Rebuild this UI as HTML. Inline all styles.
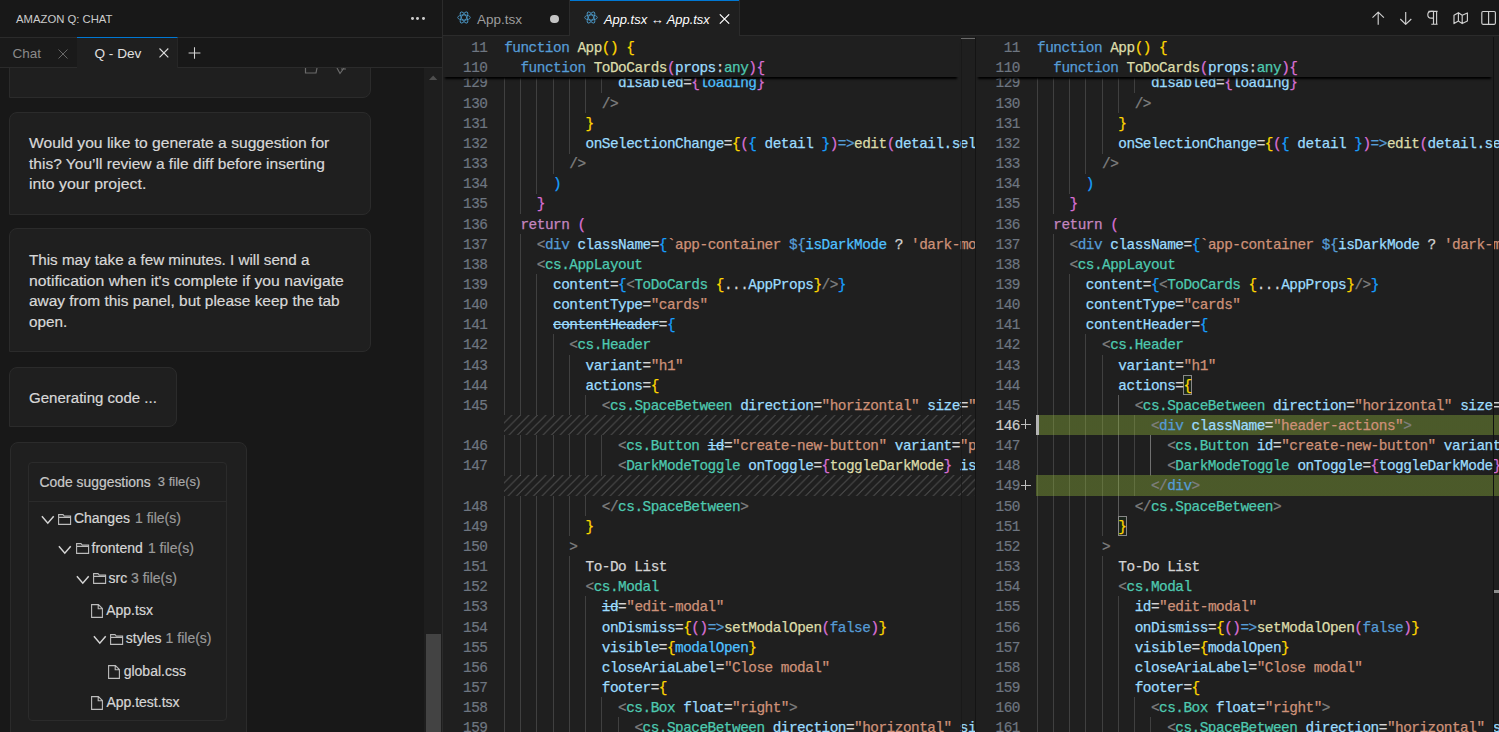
<!DOCTYPE html>
<html><head><meta charset="utf-8"><style>
*{margin:0;padding:0;box-sizing:border-box}
html,body{width:1499px;height:732px;overflow:hidden;background:#181818}
body{position:relative;font-family:"Liberation Sans",sans-serif;color:#cccccc}
.abs{position:absolute}
svg{display:block}
#side{position:absolute;left:0;top:0;width:443px;height:732px;background:#181818;border-right:1px solid #2b2b2b;overflow:hidden}
.dot{width:2.8px;height:2.8px;border-radius:50%;background:#cccccc}
.card{position:absolute;background:#1f1f1f;border:1px solid #2b2b2b;border-radius:8px;border-bottom-left-radius:0}
.tt{line-height:20px;white-space:pre;-webkit-text-stroke-width:0.2px}
.ctext{position:absolute;left:18.9px;font-size:15.4px;line-height:20.7px;color:#d8d8d8;-webkit-text-stroke:0.2px #d8d8d8;white-space:pre;transform-origin:0 0}
#edit{position:absolute;left:443px;top:0;width:1056px;height:732px;background:#1f1f1f;overflow:hidden}
.pane{position:absolute;top:37px;height:695px;overflow:hidden;background:#1f1f1f}
.ln{position:absolute;left:0;height:20.15px;line-height:20.15px;text-align:right;font-family:"Liberation Mono",monospace;font-size:14.4px;letter-spacing:-0.5px;color:#6e7681;white-space:pre;-webkit-text-stroke-width:0.2px}
.cl{position:absolute;height:20.15px;line-height:20.15px;font-family:"Liberation Mono",monospace;font-size:14.4px;letter-spacing:-0.5px;white-space:pre;color:#d4d4d4;-webkit-text-stroke-width:0.25px}
.cl i{font-style:normal}
.kw{color:#569cd6} .fn{color:#dcdcaa} .var{color:#9cdcfe} .str{color:#ce9178} .tag{color:#808080}
.type{color:#4ec9b0} .ctl{color:#c586c0} .txt{color:#d4d4d4} .op{color:#d4d4d4}
.cst{color:#4fc1ff} .b1{color:#ffd700} .b2{color:#da70d6} .b3{color:#179fff}
.s{text-decoration:line-through}
.hatch{position:absolute;right:0;height:20.15px;background-image:linear-gradient(-45deg,#cccccc33 11%,#0000 11%,#0000 50%,#cccccc33 50%,#cccccc33 61%,#0000 61%,#0000 100%);background-size:8.5px 8.5px}
.ins{position:absolute;right:0;height:20.15px;background:linear-gradient(#9ccc2c33,#9ccc2c33),#9bb95533}
.bm{position:absolute;width:9px;border:1px solid #888888;background:#0064001a}
.cur{position:absolute;width:2.5px;background:#b4b4b4}
.plus{position:absolute}
.g{position:absolute;width:1px;height:20.65px;background:#404040}
.ga{background:#707070} .ga2{background:#5a5a5a}
.ln.act{color:#cccccc}
.sticky{position:absolute;left:0;top:0;height:40.3px;background:#1f1f1f;box-shadow:0 4px 2px -2px #000}
</style></head>
<body>
<div id="side">
<div class="abs" style="left:16px;top:11px;font-size:11.3px;line-height:16px;color:#cccccc;white-space:pre">AMAZON Q: CHAT</div>
<div class="abs dot" style="left:411.05px;top:17.2px"></div>
<div class="abs dot" style="left:416.4px;top:17.2px"></div>
<div class="abs dot" style="left:421.75px;top:17.2px"></div>
<div class="abs" style="left:0;top:36.5px;width:442px;height:1px;background:#2b2b2b"></div>
<div class="abs" style="left:0;top:68px;width:424px;height:664px;background:#181818;overflow:hidden">
<div class="card" style="left:9px;top:-60px;width:362px;height:89.5px"></div>
<svg class="abs" style="left:300px;top:0" width="50" height="8" viewBox="0 0 50 8"><path d="M5.5 0 V5 H16 L17 0" fill="none" stroke="#6b6b6b" stroke-width="1.2"/><path d="M37 0 L40 5.5 L44 0 M41 1 H46" fill="none" stroke="#6b6b6b" stroke-width="1.2"/></svg>
<div class="card" style="left:9px;top:43.50px;width:362px;height:103.2px">
<div class="ctext" style="top:20.50px;transform:scaleX(1.0154)">Would you like to generate a suggestion for</div>
<div class="ctext" style="top:41.20px;transform:scaleX(1.0090)">this? You’ll review a file diff before inserting</div>
<div class="ctext" style="top:61.90px;transform:scaleX(1.0309)">into your project.</div>
</div>
<div class="card" style="left:9px;top:160.40px;width:362px;height:123.3px">
<div class="ctext" style="top:20.50px;transform:scaleX(0.9874)">This may take a few minutes. I will send a</div>
<div class="ctext" style="top:41.20px;transform:scaleX(1.0237)">notification when it's complete if you navigate</div>
<div class="ctext" style="top:61.90px;transform:scaleX(1.0028)">away from this panel, but please keep the tab</div>
<div class="ctext" style="top:82.60px;transform:scaleX(0.9943)">open.</div>
</div>
<div class="card" style="left:9px;top:298.60px;width:168px;height:60.8px">
<div class="ctext" style="top:20.50px;transform:scaleX(0.9770)">Generating code ...</div>
</div>
<div class="card" style="left:9.5px;top:374.20px;width:237px;height:400px;border-bottom-left-radius:8px">
</div>
</div>
<div class="abs" style="left:28.4px;top:462.4px;width:198.6px;height:258.8px;border:1px solid #2b2b2b;border-radius:4px;background:#1f1f1f"></div>
<div class="abs" style="left:29.4px;top:500.8px;width:196.6px;height:1px;background:#2b2b2b"></div>
<div class="abs tt" style="left:39.5px;top:472px;font-size:13.9px;color:#c8c8c8">Code suggestions</div>
<div class="abs tt" style="left:157.8px;top:472px;font-size:13px;color:#a8a8a8">3 file(s)</div>
<div class="abs tt" style="left:73.9px;top:507.9px;font-size:14px;color:#d6d6d6">Changes</div>
<div class="abs tt" style="left:135.0px;top:507.9px;font-size:14px;color:#9a9a9a">1 file(s)</div>
<div class="abs" style="left:40.7px;top:515.1px"><svg width="14" height="10" viewBox="0 0 14 10"><path d="M0.9 1.2 L6.8 8.2 L12.7 1.2" fill="none" stroke="#d4d4d4" stroke-width="1.5"/></svg></div>
<div class="abs" style="left:57.5px;top:513.7px"><svg width="14" height="11" viewBox="0 0 14 11"><path d="M0.6 0.6 H5 L6.2 2 H12.6 V10.4 H0.6 Z M0.6 3.4 H12.6" fill="none" stroke="#bdbdbd" stroke-width="1.1"/></svg></div>
<div class="abs tt" style="left:91.5px;top:537.5px;font-size:14px;color:#d6d6d6">frontend</div>
<div class="abs tt" style="left:147.9px;top:537.5px;font-size:14px;color:#9a9a9a">1 file(s)</div>
<div class="abs" style="left:58.0px;top:544.7px"><svg width="14" height="10" viewBox="0 0 14 10"><path d="M0.9 1.2 L6.8 8.2 L12.7 1.2" fill="none" stroke="#d4d4d4" stroke-width="1.5"/></svg></div>
<div class="abs" style="left:75.6px;top:543.3px"><svg width="14" height="11" viewBox="0 0 14 11"><path d="M0.6 0.6 H5 L6.2 2 H12.6 V10.4 H0.6 Z M0.6 3.4 H12.6" fill="none" stroke="#bdbdbd" stroke-width="1.1"/></svg></div>
<div class="abs tt" style="left:108.6px;top:567.5px;font-size:14px;color:#d6d6d6">src</div>
<div class="abs tt" style="left:131.0px;top:567.5px;font-size:14px;color:#9a9a9a">3 file(s)</div>
<div class="abs" style="left:75.6px;top:574.7px"><svg width="14" height="10" viewBox="0 0 14 10"><path d="M0.9 1.2 L6.8 8.2 L12.7 1.2" fill="none" stroke="#d4d4d4" stroke-width="1.5"/></svg></div>
<div class="abs" style="left:92.5px;top:573.3px"><svg width="14" height="11" viewBox="0 0 14 11"><path d="M0.6 0.6 H5 L6.2 2 H12.6 V10.4 H0.6 Z M0.6 3.4 H12.6" fill="none" stroke="#bdbdbd" stroke-width="1.1"/></svg></div>
<div class="abs tt" style="left:106.2px;top:600.0px;font-size:14px;color:#d6d6d6">App.tsx</div>
<div class="abs" style="left:90.7px;top:604.0px"><svg width="12" height="14" viewBox="0 0 12 14"><path d="M0.6 0.6 H7.4 L11.4 4.6 V13.4 H0.6 Z M7.2 0.6 V4.8 H11.4" fill="none" stroke="#bdbdbd" stroke-width="1.1"/></svg></div>
<div class="abs tt" style="left:125.8px;top:627.9px;font-size:14px;color:#d6d6d6">styles</div>
<div class="abs tt" style="left:165.6px;top:627.9px;font-size:14px;color:#9a9a9a">1 file(s)</div>
<div class="abs" style="left:92.8px;top:635.1px"><svg width="14" height="10" viewBox="0 0 14 10"><path d="M0.9 1.2 L6.8 8.2 L12.7 1.2" fill="none" stroke="#d4d4d4" stroke-width="1.5"/></svg></div>
<div class="abs" style="left:109.7px;top:633.7px"><svg width="14" height="11" viewBox="0 0 14 11"><path d="M0.6 0.6 H5 L6.2 2 H12.6 V10.4 H0.6 Z M0.6 3.4 H12.6" fill="none" stroke="#bdbdbd" stroke-width="1.1"/></svg></div>
<div class="abs tt" style="left:123.7px;top:660.8px;font-size:14px;color:#d6d6d6">global.css</div>
<div class="abs" style="left:108.4px;top:664.8px"><svg width="12" height="14" viewBox="0 0 12 14"><path d="M0.6 0.6 H7.4 L11.4 4.6 V13.4 H0.6 Z M7.2 0.6 V4.8 H11.4" fill="none" stroke="#bdbdbd" stroke-width="1.1"/></svg></div>
<div class="abs tt" style="left:106.4px;top:691.6px;font-size:14px;color:#d6d6d6">App.test.tsx</div>
<div class="abs" style="left:91.0px;top:695.6px"><svg width="12" height="14" viewBox="0 0 12 14"><path d="M0.6 0.6 H7.4 L11.4 4.6 V13.4 H0.6 Z M7.2 0.6 V4.8 H11.4" fill="none" stroke="#bdbdbd" stroke-width="1.1"/></svg></div>
<div class="abs" style="left:0;top:37.5px;width:442px;height:30px;background:#181818"></div>
<div class="abs" style="left:0;top:37.5px;width:77px;height:30px;background:#1a1a1a"></div>
<div class="abs" style="left:77px;top:37px;width:101px;height:31px;background:#1f1f1f;border-top:1.6px solid #0078d4;border-right:1px solid #262626"></div>
<div class="abs" style="left:0;top:67.2px;width:77px;height:1px;background:#2b2b2b"></div>
<div class="abs" style="left:178px;top:67.2px;width:264px;height:1px;background:#2b2b2b"></div>
<div class="abs" style="left:12.5px;top:46.3px;font-size:13.5px;line-height:16px;color:#8a8a8a">Chat</div>
<div class="abs" style="left:94.5px;top:46px;font-size:13.6px;line-height:16px;color:#e0e0e0">Q - Dev</div>
<svg class="abs" style="left:58px;top:48.5px" width="10" height="10" viewBox="0 0 10 10"><path d="M0.5 0.5 L9.5 9.5 M9.5 0.5 L0.5 9.5" stroke="#707070" stroke-width="0.9"/></svg>
<svg class="abs" style="left:158.5px;top:48.2px" width="10" height="10" viewBox="0 0 10 10"><path d="M0.5 0.5 L9.3 9.3 M9.3 0.5 L0.5 9.3" stroke="#dcdcdc" stroke-width="1.1"/></svg>
<svg class="abs" style="left:188px;top:47px" width="13" height="13" viewBox="0 0 13 13"><path d="M6.5 0.3 V11.7 M0.6 6 H12.4" stroke="#d4d4d4" stroke-width="1.05"/></svg>
<div class="abs" style="left:424px;top:68px;width:18px;height:664px;background:#1e1e1e"></div>
<svg class="abs" style="left:427px;top:75px" width="12" height="6" viewBox="0 0 12 6"><path d="M1.9 5 L6.2 0.6 L10.3 5 Z" fill="#4e4e4e"/></svg>
<div class="abs" style="left:426px;top:634px;width:15px;height:98px;background:#434343"></div>
</div>
<div id="edit"></div>
<div class="abs" style="left:443px;top:0;width:1056px;height:36px;background:#181818;border-bottom:1px solid #2b2b2b"></div>
<div class="abs" style="left:569px;top:0;width:1px;height:36px;background:#2b2b2b"></div>
<div class="abs" style="left:456.6px;top:11.4px"><svg width="14" height="13" viewBox="0 0 14 13"><g fill="none" stroke="#4d9ccc" stroke-width="0.85"><ellipse cx="7" cy="6.5" rx="6.3" ry="2.55"/><ellipse cx="7" cy="6.5" rx="6.3" ry="2.55" transform="rotate(60 7 6.5)"/><ellipse cx="7" cy="6.5" rx="6.3" ry="2.55" transform="rotate(120 7 6.5)"/></g></svg></div>
<div class="abs" style="left:477px;top:11.5px;font-size:13.5px;line-height:16px;color:#9d9d9d">App.tsx</div>
<div class="abs" style="left:550px;top:14.5px;width:8.5px;height:8.5px;border-radius:50%;background:#c4c4c4"></div>
<div class="abs" style="left:570px;top:0;width:169px;height:37px;background:#1f1f1f;border-top:1.5px solid #0078d4"></div>
<div class="abs" style="left:739px;top:0;width:1px;height:36px;background:#2b2b2b"></div>
<div class="abs" style="left:583.6px;top:11.4px"><svg width="14" height="13" viewBox="0 0 14 13"><g fill="none" stroke="#4d9ccc" stroke-width="0.85"><ellipse cx="7" cy="6.5" rx="6.3" ry="2.55"/><ellipse cx="7" cy="6.5" rx="6.3" ry="2.55" transform="rotate(60 7 6.5)"/><ellipse cx="7" cy="6.5" rx="6.3" ry="2.55" transform="rotate(120 7 6.5)"/></g></svg></div>
<div class="abs" style="left:604px;top:11.5px;font-size:13.5px;line-height:16px;color:#ffffff;font-style:italic;white-space:pre;transform:scaleX(0.957);transform-origin:0 0">App.tsx ↔ App.tsx</div>
<svg class="abs" style="left:719px;top:13.5px" width="11" height="10" viewBox="0 0 11 10"><path d="M0.8 0.3 L10.2 9.7 M10.2 0.3 L0.8 9.7" stroke="#ffffff" stroke-width="1.1"/></svg>
<svg class="abs" style="left:1360px;top:0" width="139" height="36" viewBox="1360 0 139 36">
<path d="M1378.2 24.7 V12.6 M1372.5 17.6 L1378.2 12.2 L1383.9 17.6" fill="none" stroke="#d0d0d0" stroke-width="1.15" stroke-linejoin="round"/>
<path d="M1405.7 12.1 V23.9 M1400.3 19 L1405.7 24.3 L1411.3 19" fill="none" stroke="#d0d0d0" stroke-width="1.15" stroke-linejoin="round"/>
<path d="M1428.5 11.3 H1437.6 M1433.5 11.3 V24.2 M1436.6 11.3 V24.2 M1431.3 24.2 H1437.6" fill="none" stroke="#d0d0d0" stroke-width="1.15" stroke-linejoin="round"/>
<path d="M1433.5 11.3 H1431.2 A3.4 3.4 0 0 0 1431.2 18.1 H1433.5" fill="none" stroke="#d0d0d0" stroke-width="1.15" stroke-linejoin="round"/>
<path d="M1454 15.3 L1458.4 12.7 L1462.2 15.3 L1467.4 12.9 V21 L1462.2 23.6 L1458.4 21 L1454 23.6 Z M1458.4 12.7 V21 M1462.2 15.3 V23.6" fill="none" stroke="#d0d0d0" stroke-width="1.15" stroke-linejoin="round"/>
<rect x="1481.8" y="11.5" width="13.6" height="12.8" rx="1.2" fill="none" stroke="#d0d0d0" stroke-width="1.15" stroke-linejoin="round"/>
<path d="M1488.6 11.5 V24.3" fill="none" stroke="#d0d0d0" stroke-width="1.15" stroke-linejoin="round"/>
</svg>
<div id="panes">
<div class="pane" style="left:443px;width:532.5px">
<div class="g" style="left:61px;top:35.45px"></div>
<div class="g" style="left:77px;top:35.45px"></div>
<div class="g" style="left:93px;top:35.45px"></div>
<div class="g" style="left:110px;top:35.45px"></div>
<div class="g" style="left:126px;top:35.45px"></div>
<div class="g" style="left:142px;top:35.45px"></div>
<div class="g" style="left:158px;top:35.45px"></div>
<div class="g" style="left:61px;top:55.60px"></div>
<div class="g" style="left:77px;top:55.60px"></div>
<div class="g" style="left:93px;top:55.60px"></div>
<div class="g" style="left:110px;top:55.60px"></div>
<div class="g" style="left:126px;top:55.60px"></div>
<div class="g" style="left:142px;top:55.60px"></div>
<div class="g" style="left:61px;top:75.75px"></div>
<div class="g" style="left:77px;top:75.75px"></div>
<div class="g" style="left:93px;top:75.75px"></div>
<div class="g" style="left:110px;top:75.75px"></div>
<div class="g" style="left:126px;top:75.75px"></div>
<div class="g" style="left:61px;top:95.90px"></div>
<div class="g" style="left:77px;top:95.90px"></div>
<div class="g" style="left:93px;top:95.90px"></div>
<div class="g" style="left:110px;top:95.90px"></div>
<div class="g" style="left:126px;top:95.90px"></div>
<div class="g" style="left:61px;top:116.05px"></div>
<div class="g" style="left:77px;top:116.05px"></div>
<div class="g" style="left:93px;top:116.05px"></div>
<div class="g" style="left:110px;top:116.05px"></div>
<div class="g" style="left:61px;top:136.20px"></div>
<div class="g" style="left:77px;top:136.20px"></div>
<div class="g" style="left:93px;top:136.20px"></div>
<div class="g" style="left:61px;top:156.35px"></div>
<div class="g" style="left:77px;top:156.35px"></div>
<div class="g" style="left:61px;top:176.50px"></div>
<div class="g" style="left:61px;top:196.65px"></div>
<div class="g" style="left:77px;top:196.65px"></div>
<div class="g" style="left:61px;top:216.80px"></div>
<div class="g" style="left:77px;top:216.80px"></div>
<div class="g" style="left:61px;top:236.95px"></div>
<div class="g" style="left:77px;top:236.95px"></div>
<div class="g" style="left:93px;top:236.95px"></div>
<div class="g" style="left:61px;top:257.10px"></div>
<div class="g" style="left:77px;top:257.10px"></div>
<div class="g" style="left:93px;top:257.10px"></div>
<div class="g" style="left:61px;top:277.25px"></div>
<div class="g" style="left:77px;top:277.25px"></div>
<div class="g" style="left:93px;top:277.25px"></div>
<div class="g" style="left:61px;top:297.40px"></div>
<div class="g" style="left:77px;top:297.40px"></div>
<div class="g" style="left:93px;top:297.40px"></div>
<div class="g" style="left:110px;top:297.40px"></div>
<div class="g" style="left:61px;top:317.55px"></div>
<div class="g" style="left:77px;top:317.55px"></div>
<div class="g" style="left:93px;top:317.55px"></div>
<div class="g" style="left:110px;top:317.55px"></div>
<div class="g" style="left:126px;top:317.55px"></div>
<div class="g" style="left:61px;top:337.70px"></div>
<div class="g" style="left:77px;top:337.70px"></div>
<div class="g" style="left:93px;top:337.70px"></div>
<div class="g" style="left:110px;top:337.70px"></div>
<div class="g" style="left:126px;top:337.70px"></div>
<div class="g" style="left:61px;top:357.85px"></div>
<div class="g" style="left:77px;top:357.85px"></div>
<div class="g" style="left:93px;top:357.85px"></div>
<div class="g" style="left:110px;top:357.85px"></div>
<div class="g" style="left:126px;top:357.85px"></div>
<div class="g" style="left:142px;top:357.85px"></div>
<div class="g" style="left:61px;top:398.15px"></div>
<div class="g" style="left:77px;top:398.15px"></div>
<div class="g" style="left:93px;top:398.15px"></div>
<div class="g" style="left:110px;top:398.15px"></div>
<div class="g" style="left:126px;top:398.15px"></div>
<div class="g" style="left:142px;top:398.15px"></div>
<div class="g" style="left:158px;top:398.15px"></div>
<div class="g" style="left:61px;top:418.30px"></div>
<div class="g" style="left:77px;top:418.30px"></div>
<div class="g" style="left:93px;top:418.30px"></div>
<div class="g" style="left:110px;top:418.30px"></div>
<div class="g" style="left:126px;top:418.30px"></div>
<div class="g" style="left:142px;top:418.30px"></div>
<div class="g" style="left:158px;top:418.30px"></div>
<div class="g" style="left:61px;top:458.60px"></div>
<div class="g" style="left:77px;top:458.60px"></div>
<div class="g" style="left:93px;top:458.60px"></div>
<div class="g" style="left:110px;top:458.60px"></div>
<div class="g" style="left:126px;top:458.60px"></div>
<div class="g" style="left:142px;top:458.60px"></div>
<div class="g" style="left:61px;top:478.75px"></div>
<div class="g" style="left:77px;top:478.75px"></div>
<div class="g" style="left:93px;top:478.75px"></div>
<div class="g" style="left:110px;top:478.75px"></div>
<div class="g" style="left:126px;top:478.75px"></div>
<div class="g" style="left:61px;top:498.90px"></div>
<div class="g" style="left:77px;top:498.90px"></div>
<div class="g" style="left:93px;top:498.90px"></div>
<div class="g" style="left:110px;top:498.90px"></div>
<div class="g" style="left:61px;top:519.05px"></div>
<div class="g" style="left:77px;top:519.05px"></div>
<div class="g" style="left:93px;top:519.05px"></div>
<div class="g" style="left:110px;top:519.05px"></div>
<div class="g" style="left:126px;top:519.05px"></div>
<div class="g" style="left:61px;top:539.20px"></div>
<div class="g" style="left:77px;top:539.20px"></div>
<div class="g" style="left:93px;top:539.20px"></div>
<div class="g" style="left:110px;top:539.20px"></div>
<div class="g" style="left:126px;top:539.20px"></div>
<div class="g" style="left:61px;top:559.35px"></div>
<div class="g" style="left:77px;top:559.35px"></div>
<div class="g" style="left:93px;top:559.35px"></div>
<div class="g" style="left:110px;top:559.35px"></div>
<div class="g" style="left:126px;top:559.35px"></div>
<div class="g" style="left:142px;top:559.35px"></div>
<div class="g" style="left:61px;top:579.50px"></div>
<div class="g" style="left:77px;top:579.50px"></div>
<div class="g" style="left:93px;top:579.50px"></div>
<div class="g" style="left:110px;top:579.50px"></div>
<div class="g" style="left:126px;top:579.50px"></div>
<div class="g" style="left:142px;top:579.50px"></div>
<div class="g" style="left:61px;top:599.65px"></div>
<div class="g" style="left:77px;top:599.65px"></div>
<div class="g" style="left:93px;top:599.65px"></div>
<div class="g" style="left:110px;top:599.65px"></div>
<div class="g" style="left:126px;top:599.65px"></div>
<div class="g" style="left:142px;top:599.65px"></div>
<div class="g" style="left:61px;top:619.80px"></div>
<div class="g" style="left:77px;top:619.80px"></div>
<div class="g" style="left:93px;top:619.80px"></div>
<div class="g" style="left:110px;top:619.80px"></div>
<div class="g" style="left:126px;top:619.80px"></div>
<div class="g" style="left:142px;top:619.80px"></div>
<div class="g" style="left:61px;top:639.95px"></div>
<div class="g" style="left:77px;top:639.95px"></div>
<div class="g" style="left:93px;top:639.95px"></div>
<div class="g" style="left:110px;top:639.95px"></div>
<div class="g" style="left:126px;top:639.95px"></div>
<div class="g" style="left:142px;top:639.95px"></div>
<div class="g" style="left:61px;top:660.10px"></div>
<div class="g" style="left:77px;top:660.10px"></div>
<div class="g" style="left:93px;top:660.10px"></div>
<div class="g" style="left:110px;top:660.10px"></div>
<div class="g" style="left:126px;top:660.10px"></div>
<div class="g" style="left:142px;top:660.10px"></div>
<div class="g" style="left:158px;top:660.10px"></div>
<div class="g" style="left:61px;top:680.25px"></div>
<div class="g" style="left:77px;top:680.25px"></div>
<div class="g" style="left:93px;top:680.25px"></div>
<div class="g" style="left:110px;top:680.25px"></div>
<div class="g" style="left:126px;top:680.25px"></div>
<div class="g" style="left:142px;top:680.25px"></div>
<div class="g" style="left:158px;top:680.25px"></div>
<div class="g" style="left:175px;top:680.25px"></div>
<div class="hatch" style="top:378.00px;left:61.20px"></div>
<div class="hatch" style="top:438.45px;left:61.20px"></div>
<div class="ln" style="top:36.45px;width:44.50px">129</div>
<div class="cl" style="top:36.45px;left:61.20px"><i class="op">              </i><i class="var">disabled</i><i class="op">=</i><i class="b2">{</i><i class="cst">loading</i><i class="b2">}</i></div>
<div class="ln" style="top:56.60px;width:44.50px">130</div>
<div class="cl" style="top:56.60px;left:61.20px"><i class="op">            </i><i class="tag">/&gt;</i></div>
<div class="ln" style="top:76.75px;width:44.50px">131</div>
<div class="cl" style="top:76.75px;left:61.20px"><i class="op">          </i><i class="b1">}</i></div>
<div class="ln" style="top:96.90px;width:44.50px">132</div>
<div class="cl" style="top:96.90px;left:61.20px"><i class="op">          </i><i class="var">onSelectionChange</i><i class="op">=</i><i class="b1">{</i><i class="b2">(</i><i class="b3">{</i><i class="var"> detail </i><i class="b3">}</i><i class="b2">)</i><i class="kw">=&gt;</i><i class="fn">edit</i><i class="b2">(</i><i class="var">detail.selectedItems</i><i class="b2">)</i><i class="b1">}</i></div>
<div class="ln" style="top:117.05px;width:44.50px">133</div>
<div class="cl" style="top:117.05px;left:61.20px"><i class="op">        </i><i class="tag">/&gt;</i></div>
<div class="ln" style="top:137.20px;width:44.50px">134</div>
<div class="cl" style="top:137.20px;left:61.20px"><i class="op">      </i><i class="b3">)</i></div>
<div class="ln" style="top:157.35px;width:44.50px">135</div>
<div class="cl" style="top:157.35px;left:61.20px"><i class="op">    </i><i class="b2">}</i></div>
<div class="ln" style="top:177.50px;width:44.50px">136</div>
<div class="cl" style="top:177.50px;left:61.20px"><i class="op">  </i><i class="ctl">return</i><i class="op"> </i><i class="b2">(</i></div>
<div class="ln" style="top:197.65px;width:44.50px">137</div>
<div class="cl" style="top:197.65px;left:61.20px"><i class="op">    </i><i class="tag">&lt;</i><i class="kw">div</i><i class="op"> </i><i class="var">className</i><i class="op">=</i><i class="b3">{</i><i class="str">`app-container </i><i class="kw">${</i><i class="cst">isDarkMode</i><i class="op"> ? </i><i class="str">&#x27;dark-mode&#x27; : &#x27;&#x27;</i><i class="kw">}</i><i class="str">`</i><i class="b3">}</i><i class="tag">&gt;</i></div>
<div class="ln" style="top:217.80px;width:44.50px">138</div>
<div class="cl" style="top:217.80px;left:61.20px"><i class="op">    </i><i class="tag">&lt;</i><i class="type">cs.AppLayout</i></div>
<div class="ln" style="top:237.95px;width:44.50px">139</div>
<div class="cl" style="top:237.95px;left:61.20px"><i class="op">      </i><i class="var">content</i><i class="op">=</i><i class="b3">{</i><i class="tag">&lt;</i><i class="type">ToDoCards</i><i class="op"> </i><i class="b1">{</i><i class="op">...</i><i class="var">AppProps</i><i class="b1">}</i><i class="tag">/&gt;</i><i class="b3">}</i></div>
<div class="ln" style="top:258.10px;width:44.50px">140</div>
<div class="cl" style="top:258.10px;left:61.20px"><i class="op">      </i><i class="var">contentType</i><i class="op">=</i><i class="str">&quot;cards&quot;</i></div>
<div class="ln" style="top:278.25px;width:44.50px">141</div>
<div class="cl" style="top:278.25px;left:61.20px"><i class="op">      </i><i class="var s">contentHeader</i><i class="op">=</i><i class="b3">{</i></div>
<div class="ln" style="top:298.40px;width:44.50px">142</div>
<div class="cl" style="top:298.40px;left:61.20px"><i class="op">        </i><i class="tag">&lt;</i><i class="type">cs.Header</i></div>
<div class="ln" style="top:318.55px;width:44.50px">143</div>
<div class="cl" style="top:318.55px;left:61.20px"><i class="op">          </i><i class="var">variant</i><i class="op">=</i><i class="str">&quot;h1&quot;</i></div>
<div class="ln" style="top:338.70px;width:44.50px">144</div>
<div class="cl" style="top:338.70px;left:61.20px"><i class="op">          </i><i class="var">actions</i><i class="op">=</i><i class="b1">{</i></div>
<div class="ln" style="top:358.85px;width:44.50px">145</div>
<div class="cl" style="top:358.85px;left:61.20px"><i class="op">            </i><i class="tag">&lt;</i><i class="type">cs.SpaceBetween</i><i class="op"> </i><i class="var">direction</i><i class="op">=</i><i class="str">&quot;horizontal&quot;</i><i class="op"> </i><i class="var">size</i><i class="op">=</i><i class="str">&quot;xs&quot;</i><i class="tag">&gt;</i></div>
<div class="ln" style="top:399.15px;width:44.50px">146</div>
<div class="cl" style="top:399.15px;left:61.20px"><i class="op">              </i><i class="tag">&lt;</i><i class="type">cs.Button</i><i class="op"> </i><i class="var s">id</i><i class="op">=</i><i class="str">&quot;create-new-button&quot;</i><i class="op"> </i><i class="var">variant</i><i class="op">=</i><i class="str">&quot;primary&quot;</i></div>
<div class="ln" style="top:419.30px;width:44.50px">147</div>
<div class="cl" style="top:419.30px;left:61.20px"><i class="op">              </i><i class="tag">&lt;</i><i class="type">DarkModeToggle</i><i class="op"> </i><i class="var">onToggle</i><i class="op">=</i><i class="b2">{</i><i class="fn">toggleDarkMode</i><i class="b2">}</i><i class="op"> </i><i class="var">isDarkMode</i><i class="op">=</i><i class="b2">{</i><i class="cst">isDarkMode</i><i class="b2">}</i><i class="tag">/&gt;</i></div>
<div class="ln" style="top:459.60px;width:44.50px">148</div>
<div class="cl" style="top:459.60px;left:61.20px"><i class="op">            </i><i class="tag">&lt;/</i><i class="type">cs.SpaceBetween</i><i class="tag">&gt;</i></div>
<div class="ln" style="top:479.75px;width:44.50px">149</div>
<div class="cl" style="top:479.75px;left:61.20px"><i class="op">          </i><i class="b1">}</i></div>
<div class="ln" style="top:499.90px;width:44.50px">150</div>
<div class="cl" style="top:499.90px;left:61.20px"><i class="op">        </i><i class="tag">&gt;</i></div>
<div class="ln" style="top:520.05px;width:44.50px">151</div>
<div class="cl" style="top:520.05px;left:61.20px"><i class="op">          </i><i class="txt">To-Do List</i></div>
<div class="ln" style="top:540.20px;width:44.50px">152</div>
<div class="cl" style="top:540.20px;left:61.20px"><i class="op">          </i><i class="tag">&lt;</i><i class="type">cs.Modal</i></div>
<div class="ln" style="top:560.35px;width:44.50px">153</div>
<div class="cl" style="top:560.35px;left:61.20px"><i class="op">            </i><i class="var s">id</i><i class="op">=</i><i class="str">&quot;edit-modal&quot;</i></div>
<div class="ln" style="top:580.50px;width:44.50px">154</div>
<div class="cl" style="top:580.50px;left:61.20px"><i class="op">            </i><i class="var">onDismiss</i><i class="op">=</i><i class="b1">{</i><i class="b2">()</i><i class="kw">=&gt;</i><i class="fn">setModalOpen</i><i class="b2">(</i><i class="kw">false</i><i class="b2">)</i><i class="b1">}</i></div>
<div class="ln" style="top:600.65px;width:44.50px">155</div>
<div class="cl" style="top:600.65px;left:61.20px"><i class="op">            </i><i class="var">visible</i><i class="op">=</i><i class="b1">{</i><i class="cst">modalOpen</i><i class="b1">}</i></div>
<div class="ln" style="top:620.80px;width:44.50px">156</div>
<div class="cl" style="top:620.80px;left:61.20px"><i class="op">            </i><i class="var">closeAriaLabel</i><i class="op">=</i><i class="str">&quot;Close modal&quot;</i></div>
<div class="ln" style="top:640.95px;width:44.50px">157</div>
<div class="cl" style="top:640.95px;left:61.20px"><i class="op">            </i><i class="var">footer</i><i class="op">=</i><i class="b1">{</i></div>
<div class="ln" style="top:661.10px;width:44.50px">158</div>
<div class="cl" style="top:661.10px;left:61.20px"><i class="op">              </i><i class="tag">&lt;</i><i class="type">cs.Box</i><i class="op"> </i><i class="var">float</i><i class="op">=</i><i class="str">&quot;right&quot;</i><i class="tag">&gt;</i></div>
<div class="ln" style="top:681.25px;width:44.50px">159</div>
<div class="cl" style="top:681.25px;left:61.20px"><i class="op">                </i><i class="tag">&lt;</i><i class="type">cs.SpaceBetween</i><i class="op"> </i><i class="var">direction</i><i class="op">=</i><i class="str">&quot;horizontal&quot;</i><i class="op"> </i><i class="var">size</i><i class="op">=</i><i class="str">&quot;xs&quot;</i><i class="tag">&gt;</i></div>
<div class="sticky" style="width:516.00px">
<div class="ln" style="top:0.60px;width:44.50px">11</div>
<div class="cl" style="top:0.60px;left:61.20px"><i class="kw">function</i><i class="op"> </i><i class="fn">App</i><i class="b1">()</i><i class="op"> </i><i class="b1">{</i></div>
<div class="ln" style="top:20.75px;width:44.50px">110</div>
<div class="cl" style="top:20.75px;left:61.20px"><i class="op">  </i><i class="kw">function</i><i class="op"> </i><i class="fn">ToDoCards</i><i class="b2">(</i><i class="var">props</i><i class="op">:</i><i class="type">any</i><i class="b2">)</i><i class="b2">{</i></div>
</div>
</div>
<div class="pane" style="left:976px;width:523px">
<div class="g" style="left:61px;top:35.45px"></div>
<div class="g" style="left:77px;top:35.45px"></div>
<div class="g" style="left:93px;top:35.45px"></div>
<div class="g" style="left:109px;top:35.45px"></div>
<div class="g" style="left:126px;top:35.45px"></div>
<div class="g" style="left:142px;top:35.45px"></div>
<div class="g" style="left:158px;top:35.45px"></div>
<div class="g" style="left:61px;top:55.60px"></div>
<div class="g" style="left:77px;top:55.60px"></div>
<div class="g" style="left:93px;top:55.60px"></div>
<div class="g" style="left:109px;top:55.60px"></div>
<div class="g" style="left:126px;top:55.60px"></div>
<div class="g" style="left:142px;top:55.60px"></div>
<div class="g" style="left:61px;top:75.75px"></div>
<div class="g" style="left:77px;top:75.75px"></div>
<div class="g" style="left:93px;top:75.75px"></div>
<div class="g" style="left:109px;top:75.75px"></div>
<div class="g" style="left:126px;top:75.75px"></div>
<div class="g" style="left:61px;top:95.90px"></div>
<div class="g" style="left:77px;top:95.90px"></div>
<div class="g" style="left:93px;top:95.90px"></div>
<div class="g" style="left:109px;top:95.90px"></div>
<div class="g" style="left:126px;top:95.90px"></div>
<div class="g" style="left:61px;top:116.05px"></div>
<div class="g" style="left:77px;top:116.05px"></div>
<div class="g" style="left:93px;top:116.05px"></div>
<div class="g" style="left:109px;top:116.05px"></div>
<div class="g" style="left:61px;top:136.20px"></div>
<div class="g" style="left:77px;top:136.20px"></div>
<div class="g" style="left:93px;top:136.20px"></div>
<div class="g" style="left:61px;top:156.35px"></div>
<div class="g" style="left:77px;top:156.35px"></div>
<div class="g" style="left:61px;top:176.50px"></div>
<div class="g" style="left:61px;top:196.65px"></div>
<div class="g" style="left:77px;top:196.65px"></div>
<div class="g" style="left:61px;top:216.80px"></div>
<div class="g" style="left:77px;top:216.80px"></div>
<div class="g" style="left:61px;top:236.95px"></div>
<div class="g" style="left:77px;top:236.95px"></div>
<div class="g" style="left:93px;top:236.95px"></div>
<div class="g" style="left:61px;top:257.10px"></div>
<div class="g" style="left:77px;top:257.10px"></div>
<div class="g" style="left:93px;top:257.10px"></div>
<div class="g" style="left:61px;top:277.25px"></div>
<div class="g" style="left:77px;top:277.25px"></div>
<div class="g" style="left:93px;top:277.25px"></div>
<div class="g" style="left:61px;top:297.40px"></div>
<div class="g" style="left:77px;top:297.40px"></div>
<div class="g" style="left:93px;top:297.40px"></div>
<div class="g" style="left:109px;top:297.40px"></div>
<div class="g" style="left:61px;top:317.55px"></div>
<div class="g" style="left:77px;top:317.55px"></div>
<div class="g" style="left:93px;top:317.55px"></div>
<div class="g" style="left:109px;top:317.55px"></div>
<div class="g" style="left:126px;top:317.55px"></div>
<div class="g" style="left:61px;top:337.70px"></div>
<div class="g" style="left:77px;top:337.70px"></div>
<div class="g" style="left:93px;top:337.70px"></div>
<div class="g" style="left:109px;top:337.70px"></div>
<div class="g" style="left:126px;top:337.70px"></div>
<div class="g" style="left:61px;top:357.85px"></div>
<div class="g" style="left:77px;top:357.85px"></div>
<div class="g" style="left:93px;top:357.85px"></div>
<div class="g" style="left:109px;top:357.85px"></div>
<div class="g" style="left:126px;top:357.85px"></div>
<div class="g" style="left:142px;top:357.85px"></div>
<div class="g" style="left:61px;top:378.00px"></div>
<div class="g" style="left:77px;top:378.00px"></div>
<div class="g" style="left:93px;top:378.00px"></div>
<div class="g" style="left:109px;top:378.00px"></div>
<div class="g" style="left:126px;top:378.00px"></div>
<div class="g" style="left:142px;top:378.00px"></div>
<div class="g" style="left:158px;top:378.00px"></div>
<div class="g" style="left:61px;top:398.15px"></div>
<div class="g" style="left:77px;top:398.15px"></div>
<div class="g" style="left:93px;top:398.15px"></div>
<div class="g" style="left:109px;top:398.15px"></div>
<div class="g" style="left:126px;top:398.15px"></div>
<div class="g" style="left:142px;top:398.15px"></div>
<div class="g" style="left:158px;top:398.15px"></div>
<div class="g" style="left:174px;top:398.15px"></div>
<div class="g" style="left:61px;top:418.30px"></div>
<div class="g" style="left:77px;top:418.30px"></div>
<div class="g" style="left:93px;top:418.30px"></div>
<div class="g" style="left:109px;top:418.30px"></div>
<div class="g" style="left:126px;top:418.30px"></div>
<div class="g" style="left:142px;top:418.30px"></div>
<div class="g" style="left:158px;top:418.30px"></div>
<div class="g" style="left:174px;top:418.30px"></div>
<div class="g" style="left:61px;top:438.45px"></div>
<div class="g" style="left:77px;top:438.45px"></div>
<div class="g" style="left:93px;top:438.45px"></div>
<div class="g" style="left:109px;top:438.45px"></div>
<div class="g" style="left:126px;top:438.45px"></div>
<div class="g" style="left:142px;top:438.45px"></div>
<div class="g" style="left:158px;top:438.45px"></div>
<div class="g" style="left:61px;top:458.60px"></div>
<div class="g" style="left:77px;top:458.60px"></div>
<div class="g" style="left:93px;top:458.60px"></div>
<div class="g" style="left:109px;top:458.60px"></div>
<div class="g" style="left:126px;top:458.60px"></div>
<div class="g" style="left:142px;top:458.60px"></div>
<div class="g" style="left:61px;top:478.75px"></div>
<div class="g" style="left:77px;top:478.75px"></div>
<div class="g" style="left:93px;top:478.75px"></div>
<div class="g" style="left:109px;top:478.75px"></div>
<div class="g" style="left:126px;top:478.75px"></div>
<div class="g" style="left:61px;top:498.90px"></div>
<div class="g" style="left:77px;top:498.90px"></div>
<div class="g" style="left:93px;top:498.90px"></div>
<div class="g" style="left:109px;top:498.90px"></div>
<div class="g" style="left:61px;top:519.05px"></div>
<div class="g" style="left:77px;top:519.05px"></div>
<div class="g" style="left:93px;top:519.05px"></div>
<div class="g" style="left:109px;top:519.05px"></div>
<div class="g" style="left:126px;top:519.05px"></div>
<div class="g" style="left:61px;top:539.20px"></div>
<div class="g" style="left:77px;top:539.20px"></div>
<div class="g" style="left:93px;top:539.20px"></div>
<div class="g" style="left:109px;top:539.20px"></div>
<div class="g" style="left:126px;top:539.20px"></div>
<div class="g" style="left:61px;top:559.35px"></div>
<div class="g" style="left:77px;top:559.35px"></div>
<div class="g" style="left:93px;top:559.35px"></div>
<div class="g" style="left:109px;top:559.35px"></div>
<div class="g" style="left:126px;top:559.35px"></div>
<div class="g" style="left:142px;top:559.35px"></div>
<div class="g" style="left:61px;top:579.50px"></div>
<div class="g" style="left:77px;top:579.50px"></div>
<div class="g" style="left:93px;top:579.50px"></div>
<div class="g" style="left:109px;top:579.50px"></div>
<div class="g" style="left:126px;top:579.50px"></div>
<div class="g" style="left:142px;top:579.50px"></div>
<div class="g" style="left:61px;top:599.65px"></div>
<div class="g" style="left:77px;top:599.65px"></div>
<div class="g" style="left:93px;top:599.65px"></div>
<div class="g" style="left:109px;top:599.65px"></div>
<div class="g" style="left:126px;top:599.65px"></div>
<div class="g" style="left:142px;top:599.65px"></div>
<div class="g" style="left:61px;top:619.80px"></div>
<div class="g" style="left:77px;top:619.80px"></div>
<div class="g" style="left:93px;top:619.80px"></div>
<div class="g" style="left:109px;top:619.80px"></div>
<div class="g" style="left:126px;top:619.80px"></div>
<div class="g" style="left:142px;top:619.80px"></div>
<div class="g" style="left:61px;top:639.95px"></div>
<div class="g" style="left:77px;top:639.95px"></div>
<div class="g" style="left:93px;top:639.95px"></div>
<div class="g" style="left:109px;top:639.95px"></div>
<div class="g" style="left:126px;top:639.95px"></div>
<div class="g" style="left:142px;top:639.95px"></div>
<div class="g" style="left:61px;top:660.10px"></div>
<div class="g" style="left:77px;top:660.10px"></div>
<div class="g" style="left:93px;top:660.10px"></div>
<div class="g" style="left:109px;top:660.10px"></div>
<div class="g" style="left:126px;top:660.10px"></div>
<div class="g" style="left:142px;top:660.10px"></div>
<div class="g" style="left:158px;top:660.10px"></div>
<div class="g" style="left:61px;top:680.25px"></div>
<div class="g" style="left:77px;top:680.25px"></div>
<div class="g" style="left:93px;top:680.25px"></div>
<div class="g" style="left:109px;top:680.25px"></div>
<div class="g" style="left:126px;top:680.25px"></div>
<div class="g" style="left:142px;top:680.25px"></div>
<div class="g" style="left:158px;top:680.25px"></div>
<div class="g" style="left:174px;top:680.25px"></div>
<div class="g ga2" style="left:142.00px;top:357.85px;height:120.90px"></div>
<div class="g ga" style="left:174.00px;top:398.15px;height:40.30px"></div>
<div class="ins" style="top:378.00px;left:60.20px"></div>
<div class="ins" style="top:438.45px;left:60.20px"></div>
<div class="bm" style="left:207.02px;top:337.70px;height:20.15px"></div>
<div class="bm" style="left:141.90px;top:478.75px;height:20.15px"></div>
<div class="cur" style="left:60.10px;top:378.00px;height:20.15px"></div>
<div class="ln" style="top:36.45px;width:44.00px">129</div>
<div class="cl" style="top:36.45px;left:61.00px"><i class="op">              </i><i class="var">disabled</i><i class="op">=</i><i class="b2">{</i><i class="var">loading</i><i class="b2">}</i></div>
<div class="ln" style="top:56.60px;width:44.00px">130</div>
<div class="cl" style="top:56.60px;left:61.00px"><i class="op">            </i><i class="tag">/&gt;</i></div>
<div class="ln" style="top:76.75px;width:44.00px">131</div>
<div class="cl" style="top:76.75px;left:61.00px"><i class="op">          </i><i class="b1">}</i></div>
<div class="ln" style="top:96.90px;width:44.00px">132</div>
<div class="cl" style="top:96.90px;left:61.00px"><i class="op">          </i><i class="var">onSelectionChange</i><i class="op">=</i><i class="b1">{</i><i class="b2">(</i><i class="b3">{</i><i class="var"> detail </i><i class="b3">}</i><i class="b2">)</i><i class="kw">=&gt;</i><i class="fn">edit</i><i class="b2">(</i><i class="var">detail.selectedItems</i><i class="b2">)</i><i class="b1">}</i></div>
<div class="ln" style="top:117.05px;width:44.00px">133</div>
<div class="cl" style="top:117.05px;left:61.00px"><i class="op">        </i><i class="tag">/&gt;</i></div>
<div class="ln" style="top:137.20px;width:44.00px">134</div>
<div class="cl" style="top:137.20px;left:61.00px"><i class="op">      </i><i class="b3">)</i></div>
<div class="ln" style="top:157.35px;width:44.00px">135</div>
<div class="cl" style="top:157.35px;left:61.00px"><i class="op">    </i><i class="b2">}</i></div>
<div class="ln" style="top:177.50px;width:44.00px">136</div>
<div class="cl" style="top:177.50px;left:61.00px"><i class="op">  </i><i class="ctl">return</i><i class="op"> </i><i class="b2">(</i></div>
<div class="ln" style="top:197.65px;width:44.00px">137</div>
<div class="cl" style="top:197.65px;left:61.00px"><i class="op">    </i><i class="tag">&lt;</i><i class="kw">div</i><i class="op"> </i><i class="var">className</i><i class="op">=</i><i class="b3">{</i><i class="str">`app-container </i><i class="kw">${</i><i class="var">isDarkMode</i><i class="op"> ? </i><i class="str">&#x27;dark-mode&#x27; : &#x27;&#x27;</i><i class="kw">}</i><i class="str">`</i><i class="b3">}</i><i class="tag">&gt;</i></div>
<div class="ln" style="top:217.80px;width:44.00px">138</div>
<div class="cl" style="top:217.80px;left:61.00px"><i class="op">    </i><i class="tag">&lt;</i><i class="type">cs.AppLayout</i></div>
<div class="ln" style="top:237.95px;width:44.00px">139</div>
<div class="cl" style="top:237.95px;left:61.00px"><i class="op">      </i><i class="var">content</i><i class="op">=</i><i class="b3">{</i><i class="tag">&lt;</i><i class="type">ToDoCards</i><i class="op"> </i><i class="b1">{</i><i class="op">...</i><i class="var">AppProps</i><i class="b1">}</i><i class="tag">/&gt;</i><i class="b3">}</i></div>
<div class="ln" style="top:258.10px;width:44.00px">140</div>
<div class="cl" style="top:258.10px;left:61.00px"><i class="op">      </i><i class="var">contentType</i><i class="op">=</i><i class="str">&quot;cards&quot;</i></div>
<div class="ln" style="top:278.25px;width:44.00px">141</div>
<div class="cl" style="top:278.25px;left:61.00px"><i class="op">      </i><i class="var">contentHeader</i><i class="op">=</i><i class="b3">{</i></div>
<div class="ln" style="top:298.40px;width:44.00px">142</div>
<div class="cl" style="top:298.40px;left:61.00px"><i class="op">        </i><i class="tag">&lt;</i><i class="type">cs.Header</i></div>
<div class="ln" style="top:318.55px;width:44.00px">143</div>
<div class="cl" style="top:318.55px;left:61.00px"><i class="op">          </i><i class="var">variant</i><i class="op">=</i><i class="str">&quot;h1&quot;</i></div>
<div class="ln" style="top:338.70px;width:44.00px">144</div>
<div class="cl" style="top:338.70px;left:61.00px"><i class="op">          </i><i class="var">actions</i><i class="op">=</i><i class="b1">{</i></div>
<div class="ln" style="top:358.85px;width:44.00px">145</div>
<div class="cl" style="top:358.85px;left:61.00px"><i class="op">            </i><i class="tag">&lt;</i><i class="type">cs.SpaceBetween</i><i class="op"> </i><i class="var">direction</i><i class="op">=</i><i class="str">&quot;horizontal&quot;</i><i class="op"> </i><i class="var">size</i><i class="op">=</i><i class="str">&quot;xs&quot;</i><i class="tag">&gt;</i></div>
<div class="ln act" style="top:379.00px;width:44.00px">146</div>
<svg class="plus" style="top:382.00px;left:45.00px" width="11" height="11" viewBox="0 0 11 11"><path d="M4.5 0 V10 M0 5.5 H10" stroke="#bdbdbd" stroke-width="1"/></svg>
<div class="cl" style="top:379.00px;left:61.00px"><i class="op">              </i><i class="tag">&lt;</i><i class="kw">div</i><i class="op"> </i><i class="var">className</i><i class="op">=</i><i class="str">&quot;header-actions&quot;</i><i class="tag">&gt;</i></div>
<div class="ln" style="top:399.15px;width:44.00px">147</div>
<div class="cl" style="top:399.15px;left:61.00px"><i class="op">                </i><i class="tag">&lt;</i><i class="type">cs.Button</i><i class="op"> </i><i class="var">id</i><i class="op">=</i><i class="str">&quot;create-new-button&quot;</i><i class="op"> </i><i class="var">variant</i><i class="op">=</i><i class="str">&quot;primary&quot;</i></div>
<div class="ln" style="top:419.30px;width:44.00px">148</div>
<div class="cl" style="top:419.30px;left:61.00px"><i class="op">                </i><i class="tag">&lt;</i><i class="type">DarkModeToggle</i><i class="op"> </i><i class="var">onToggle</i><i class="op">=</i><i class="b2">{</i><i class="var">toggleDarkMode</i><i class="b2">}</i><i class="op"> </i><i class="var">isDarkMode</i><i class="op">=</i><i class="b2">{</i><i class="var">isDarkMode</i><i class="b2">}</i><i class="tag">/&gt;</i></div>
<div class="ln" style="top:439.45px;width:44.00px">149</div>
<svg class="plus" style="top:443.00px;left:45.00px" width="11" height="11" viewBox="0 0 11 11"><path d="M4.5 0 V10 M0 5.5 H10" stroke="#bdbdbd" stroke-width="1"/></svg>
<div class="cl" style="top:439.45px;left:61.00px"><i class="op">              </i><i class="tag">&lt;/</i><i class="kw">div</i><i class="tag">&gt;</i></div>
<div class="ln" style="top:459.60px;width:44.00px">150</div>
<div class="cl" style="top:459.60px;left:61.00px"><i class="op">            </i><i class="tag">&lt;/</i><i class="type">cs.SpaceBetween</i><i class="tag">&gt;</i></div>
<div class="ln" style="top:479.75px;width:44.00px">151</div>
<div class="cl" style="top:479.75px;left:61.00px"><i class="op">          </i><i class="b1">}</i></div>
<div class="ln" style="top:499.90px;width:44.00px">152</div>
<div class="cl" style="top:499.90px;left:61.00px"><i class="op">        </i><i class="tag">&gt;</i></div>
<div class="ln" style="top:520.05px;width:44.00px">153</div>
<div class="cl" style="top:520.05px;left:61.00px"><i class="op">          </i><i class="txt">To-Do List</i></div>
<div class="ln" style="top:540.20px;width:44.00px">154</div>
<div class="cl" style="top:540.20px;left:61.00px"><i class="op">          </i><i class="tag">&lt;</i><i class="type">cs.Modal</i></div>
<div class="ln" style="top:560.35px;width:44.00px">155</div>
<div class="cl" style="top:560.35px;left:61.00px"><i class="op">            </i><i class="var">id</i><i class="op">=</i><i class="str">&quot;edit-modal&quot;</i></div>
<div class="ln" style="top:580.50px;width:44.00px">156</div>
<div class="cl" style="top:580.50px;left:61.00px"><i class="op">            </i><i class="var">onDismiss</i><i class="op">=</i><i class="b1">{</i><i class="b2">()</i><i class="kw">=&gt;</i><i class="fn">setModalOpen</i><i class="b2">(</i><i class="kw">false</i><i class="b2">)</i><i class="b1">}</i></div>
<div class="ln" style="top:600.65px;width:44.00px">157</div>
<div class="cl" style="top:600.65px;left:61.00px"><i class="op">            </i><i class="var">visible</i><i class="op">=</i><i class="b1">{</i><i class="var">modalOpen</i><i class="b1">}</i></div>
<div class="ln" style="top:620.80px;width:44.00px">158</div>
<div class="cl" style="top:620.80px;left:61.00px"><i class="op">            </i><i class="var">closeAriaLabel</i><i class="op">=</i><i class="str">&quot;Close modal&quot;</i></div>
<div class="ln" style="top:640.95px;width:44.00px">159</div>
<div class="cl" style="top:640.95px;left:61.00px"><i class="op">            </i><i class="var">footer</i><i class="op">=</i><i class="b1">{</i></div>
<div class="ln" style="top:661.10px;width:44.00px">160</div>
<div class="cl" style="top:661.10px;left:61.00px"><i class="op">              </i><i class="tag">&lt;</i><i class="type">cs.Box</i><i class="op"> </i><i class="var">float</i><i class="op">=</i><i class="str">&quot;right&quot;</i><i class="tag">&gt;</i></div>
<div class="ln" style="top:681.25px;width:44.00px">161</div>
<div class="cl" style="top:681.25px;left:61.00px"><i class="op">                </i><i class="tag">&lt;</i><i class="type">cs.SpaceBetween</i><i class="op"> </i><i class="var">direction</i><i class="op">=</i><i class="str">&quot;horizontal&quot;</i><i class="op"> </i><i class="var">size</i><i class="op">=</i><i class="str">&quot;xs&quot;</i><i class="tag">&gt;</i></div>
<div class="sticky" style="width:517.00px">
<div class="ln" style="top:0.60px;width:44.00px">11</div>
<div class="cl" style="top:0.60px;left:61.00px"><i class="kw">function</i><i class="op"> </i><i class="fn">App</i><i class="b1">()</i><i class="op"> </i><i class="b1">{</i></div>
<div class="ln" style="top:20.75px;width:44.00px">110</div>
<div class="cl" style="top:20.75px;left:61.00px"><i class="op">  </i><i class="kw">function</i><i class="op"> </i><i class="fn">ToDoCards</i><i class="b2">(</i><i class="var">props</i><i class="op">:</i><i class="type">any</i><i class="b2">)</i><i class="b2">{</i></div>
</div>
</div>
</div>
<div class="abs" style="left:961px;top:37px;width:1px;height:695px;background:#191919;opacity:0.85"></div>
<div class="abs" style="left:974.5px;top:37px;width:1.5px;height:695px;background:#141414"></div>
<div class="abs" style="left:961px;top:37.5px;width:14px;height:1.5px;background:#6a6a6a"></div>
<div class="abs" style="left:1493.2px;top:37px;width:1.2px;height:695px;background:#111111"></div>
<div class="abs" style="left:1494px;top:590px;width:5px;height:2.5px;background:#8e8e8e"></div>
</body></html>
